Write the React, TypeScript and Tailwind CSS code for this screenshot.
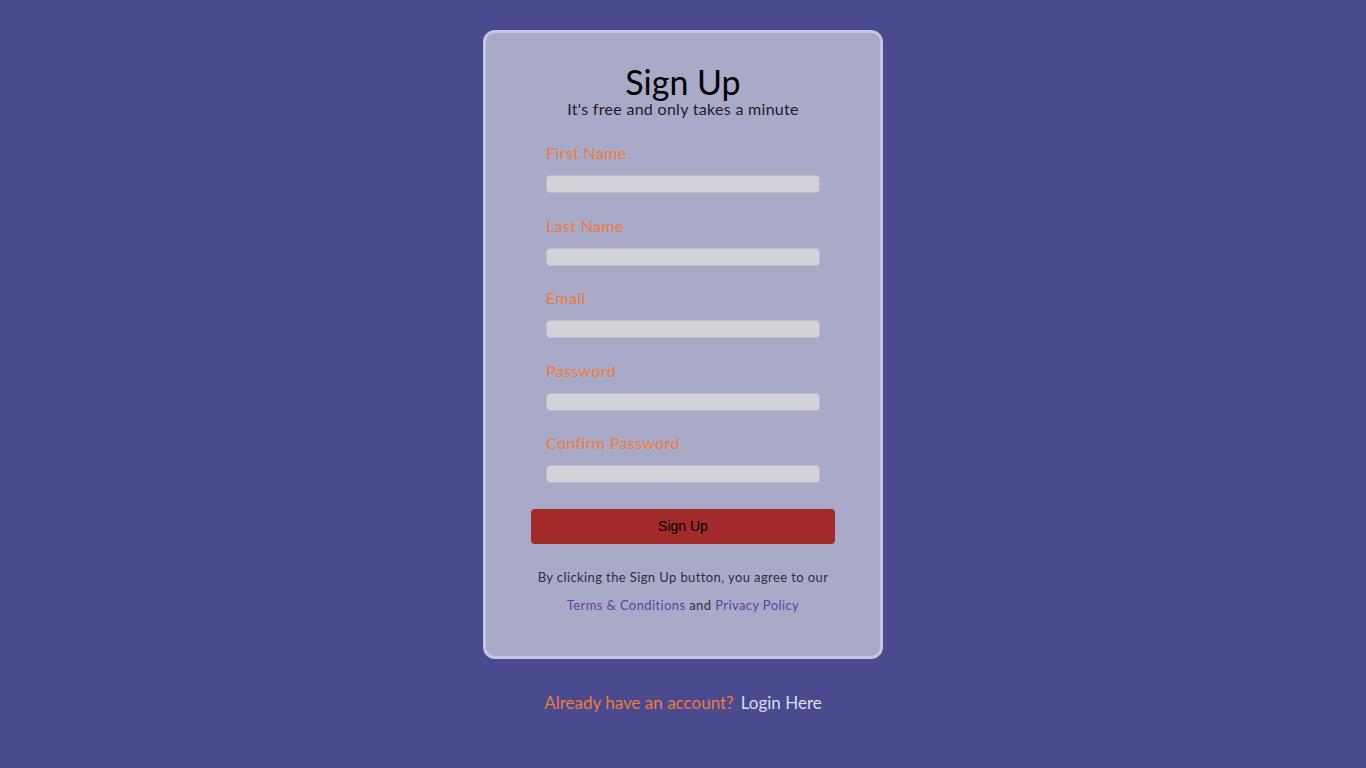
const fields = ["First Name", "Last Name", "Email", "Password", "Confirm Password"];

export default function App() {
  return (
    <div
      className="flex min-h-screen flex-col items-center bg-[#4a4b8f] pt-[30px] pb-10"
      style={{ fontFamily: '"Lato", "Open Sans", sans-serif' }}
    >
      <form
        className="flex w-[400px] flex-col items-center rounded-[12px] border-[3px] border-[#c6c7de] bg-[#a9aac8] pt-[32px] pb-[37px]"
        onSubmit={(e) => e.preventDefault()}
      >
        <h1 className="text-[34px] leading-[34px] text-black">Sign Up</h1>
        <p className="text-[16px] leading-[20px] tracking-[0.3px] text-[#1c1c2a]">
          It's free and only takes a minute
        </p>

        <div className="mt-[24px] flex w-[274px] flex-col">
          {fields.map((label, i) => (
            <div key={label} className={i === 0 ? "" : "mt-[22.5px]"}>
              <label className="block text-[16px] leading-[20px] tracking-[0.35px] text-[#ee7a3c]">
                {label}
              </label>
              <input
                type={label.includes("Password") ? "password" : "text"}
                className="mt-[12px] block h-[18px] w-full rounded-[4px] border border-[#bdbccb] bg-[#d3d2d9] outline-none"
              />
            </div>
          ))}
        </div>

        <button
          type="submit"
          className="mt-[26px] h-[35px] w-[304px] rounded-[4px] bg-[#a32a2a] text-[14px] text-black"
          style={{ fontFamily: '"Liberation Sans", Arial, sans-serif' }}
        >
          Sign Up
        </button>

        <div className="mt-[19px] text-center text-[13px] leading-[28px] tracking-[0.4px] text-[#2e2e3e]">
          <p>By clicking the Sign Up button, you agree to our</p>
          <p>
            <a href="#" className="text-[#5b43a0]">
              Terms &amp; Conditions
            </a>{" "}
            and{" "}
            <a href="#" className="text-[#5b43a0]">
              Privacy Policy
            </a>
          </p>
        </div>
      </form>

      <p className="mt-[32px] text-[17px] leading-[24px]">
        <span className="text-[#ee7a3c]">Already have an account?</span>
        <a href="#" className="ml-[7px] text-[#dcdcf0]">
          Login Here
        </a>
      </p>
    </div>
  );
}
